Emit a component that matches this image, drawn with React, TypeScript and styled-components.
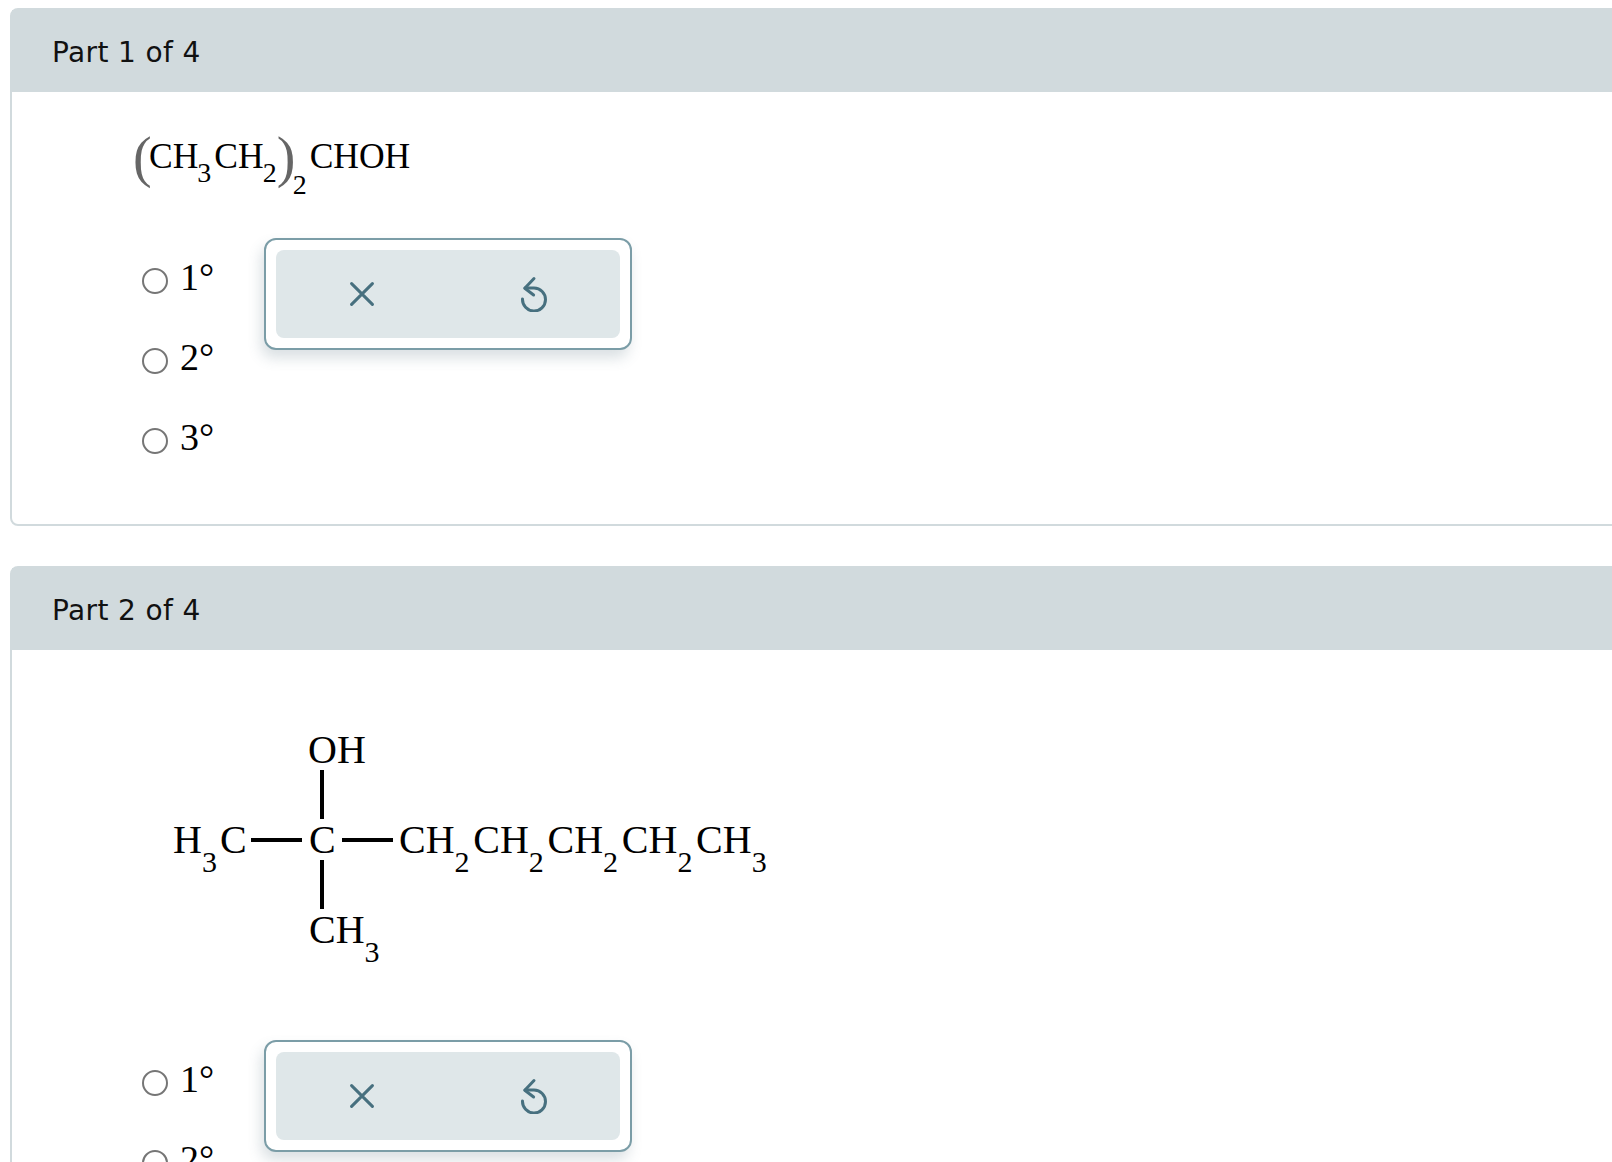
import React from "react";
import styled, { createGlobalStyle } from "styled-components";

const GlobalStyle = createGlobalStyle`
	html, body {
		margin: 0;
		padding: 0;
		background: #fff;
		overflow: hidden;
	}
`;

const serif = `"Liberation Serif", "Times New Roman", serif`;

const App = () => {
	return (
		<Page>
			<GlobalStyle />
			<Card>
				<CardHeader>Part 1 of 4</CardHeader>
				<CardBody>
					<FormulaLine>
						<Paren>(</Paren>
						CH<Sub $drop={14} $pull={1} $gap={3}>3</Sub>CH<Sub $drop={14} $pull={1} $gap={0}>2</Sub>
						<Paren>)</Paren>
						<Sub $drop={26} $gap={3}>2</Sub>CHOH
					</FormulaLine>
					<Answers />
				</CardBody>
			</Card>
			<Card>
				<CardHeader>Part 2 of 4</CardHeader>
				<CardBody>
					<Structure>
						<TopLabel>OH</TopLabel>
						<VerticalBond $row={2} />
						<LeftLabel>
							H<Sub $large $drop={19} $gap={3}>3</Sub>C
						</LeftLabel>
						<HorizontalBond $col={2} />
						<CenterAtom>C</CenterAtom>
						<HorizontalBond $col={4} />
						<Chain>
							CH<Sub $large $drop={19} $gap={3.7}>2</Sub>
							CH<Sub $large $drop={19} $gap={3.7}>2</Sub>
							CH<Sub $large $drop={19} $gap={3.7}>2</Sub>
							CH<Sub $large $drop={19} $gap={3.7}>2</Sub>
							CH<Sub $large $drop={19}>3</Sub>
						</Chain>
						<VerticalBond $row={4} />
						<BottomLabel>
							CH<Sub $large $drop={19}>3</Sub>
						</BottomLabel>
					</Structure>
					<Answers />
				</CardBody>
			</Card>
		</Page>
	);
};

const Answers = () => {
	return (
		<AnswerRow>
			<RadioList>
				{["1°", "2°", "3°"].map((label) => (
					<RadioRow key={label}>
						<Radio type="radio" />
						<RadioText>{label}</RadioText>
					</RadioRow>
				))}
			</RadioList>
			<ToolBox>
				<ToolBar>
					<ToolButton aria-label="clear">
						<svg width="24" height="24" viewBox="0 0 24 24" fill="none" stroke="#47707f" strokeWidth="3" strokeLinecap="round">
							<path d="M1.6 1.6 22.4 22.4M22.4 1.6 1.6 22.4" />
						</svg>
					</ToolButton>
					<ToolButton aria-label="undo">
						<svg width="28" height="36" viewBox="0 0 28 36" fill="none" stroke="#47707f" strokeWidth="3" strokeLinecap="round" strokeLinejoin="round">
							<path d="M14 2.5 4.8 12.2 13.6 19" />
							<path d="M5 12 H14 A11.5 11.5 0 1 1 2.5 23" />
						</svg>
					</ToolButton>
				</ToolBar>
			</ToolBox>
		</AnswerRow>
	);
};

const Page = styled.div`
	width: 1612px;
	height: 1162px;
	overflow: hidden;
	box-sizing: border-box;
	padding: 8px 0 0 10px;
	display: flex;
	flex-direction: column;
	gap: 40px;
`;

const Card = styled.section`
	flex: none;
	width: 1680px;
	box-sizing: border-box;
	border: 2px solid #d1dadd;
	border-radius: 8px;
	background: #fff;
`;

const CardHeader = styled.h2`
	margin: 0;
	height: 82px;
	box-sizing: border-box;
	padding: 2px 0 0 40px;
	display: flex;
	align-items: center;
	background: #d1dadd;
	color: #111;
	font: 400 28px "DejaVu Sans", Verdana, sans-serif;
	letter-spacing: 0.36px;
`;

const CardBody = styled.div`
	padding-bottom: 43px;
`;

const FormulaLine = styled.div`
	height: 40px;
	margin-top: 44px;
	padding-left: 121px;
	color: #000;
	font: 400 35.5px/40px ${serif};
	white-space: nowrap;
`;

const Paren = styled.span`
	display: inline-block;
	width: 16px;
	color: #666;
	font-size: 56px;
	font-weight: 400;
	line-height: 0;
	vertical-align: -8px;
`;

const Sub = styled.span<{ $drop: number; $gap?: number; $large?: boolean; $pull?: number }>`
	margin-left: ${(props) => -(props.$pull ?? 0)}px;
	margin-right: ${(props) => props.$gap ?? 2}px;
	font-size: ${(props) => (props.$large ? 30 : 28)}px;
	line-height: 0;
	vertical-align: ${(props) => -props.$drop}px;
`;

const Structure = styled.div`
	display: grid;
	grid-template-columns: 78px 51px 40px 51px 1fr;
	grid-template-rows: 41px 49px 41px 49px 41px;
	margin: 79px 0 90px 161px;
	color: #000;
	font: 400 40px/41px ${serif};
	white-space: nowrap;
`;

const TopLabel = styled.div`
	grid-column: 3;
	grid-row: 1;
	padding-left: 6px;
`;

const LeftLabel = styled.div`
	grid-column: 1;
	grid-row: 3;
`;

const CenterAtom = styled.div`
	grid-column: 3;
	grid-row: 3;
	padding-left: 7px;
`;

const Chain = styled.div`
	grid-column: 5;
	grid-row: 3;
	padding-left: 6px;
`;

const BottomLabel = styled.div`
	grid-column: 3;
	grid-row: 5;
	padding-left: 7px;
`;

const VerticalBond = styled.div<{ $row: number }>`
	grid-column: 3;
	grid-row: ${(props) => props.$row};
	width: 4px;
	margin-left: 18px;
	background: #000;
`;

const HorizontalBond = styled.div<{ $col: number }>`
	grid-column: ${(props) => props.$col};
	grid-row: 3;
	align-self: center;
	height: 4px;
	background: #000;
`;

const AnswerRow = styled.div`
	display: flex;
	align-items: flex-start;
	margin-top: 62px;
	padding-left: 130px;
`;

const RadioList = styled.div`
	width: 122px;
	margin-top: 3px;
	display: flex;
	flex-direction: column;
`;

const RadioRow = styled.label`
	height: 80px;
	display: flex;
	align-items: center;
	gap: 12px;
`;

const Radio = styled.input`
	appearance: none;
	width: 26px;
	height: 26px;
	margin: 0;
	border: 2px solid #767676;
	border-radius: 50%;
	background: #fff;
`;

const RadioText = styled.span`
	padding-bottom: 8px;
	color: #000;
	font: 400 38px/40px ${serif};
`;

const ToolBox = styled.div`
	width: 368px;
	height: 112px;
	box-sizing: border-box;
	padding: 10px;
	background: #fff;
	border: 2px solid #7b9da7;
	border-radius: 12px;
	box-shadow: -3px 8px 14px rgba(70, 100, 115, 0.2);
`;

const ToolBar = styled.div`
	height: 100%;
	display: grid;
	grid-template-columns: 1fr 1fr;
	background: #dfe7e9;
	border-radius: 8px;
`;

const ToolButton = styled.button`
	display: flex;
	align-items: center;
	justify-content: center;
	padding: 0;
	border: 0;
	background: transparent;
`;

export default App;
